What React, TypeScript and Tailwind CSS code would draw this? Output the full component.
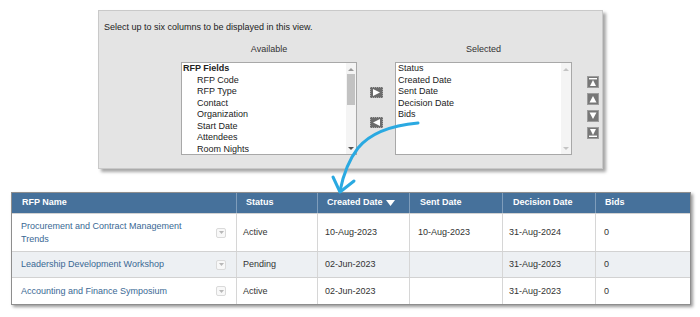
import React from 'react'

const available = [
  'RFP Code',
  'RFP Type',
  'Contact',
  'Organization',
  'Start Date',
  'Attendees',
  'Room Nights'
]

const selected = ['Status', 'Created Date', 'Sent Date', 'Decision Date', 'Bids']

interface Row {
  name: string
  status: string
  created: string
  sent: string
  decision: string
  bids: string
  height: string
  shaded?: boolean
}

const rows: Row[] = [
  {
    name: 'Procurement and Contract Management Trends',
    status: 'Active',
    created: '10-Aug-2023',
    sent: '10-Aug-2023',
    decision: '31-Aug-2024',
    bids: '0',
    height: 'h-[38px]'
  },
  {
    name: 'Leadership Development Workshop',
    status: 'Pending',
    created: '02-Jun-2023',
    sent: '',
    decision: '31-Aug-2023',
    bids: '0',
    height: 'h-[26px]',
    shaded: true
  },
  {
    name: 'Accounting and Finance Symposium',
    status: 'Active',
    created: '02-Jun-2023',
    sent: '',
    decision: '31-Aug-2023',
    bids: '0',
    height: 'h-[27px]'
  }
]

const cols = 'grid grid-cols-[224px_81px_92px_93px_93px_1fr]'

function Scrollbar({ thumb }: { thumb?: boolean }) {
  return (
    <div className="flex w-[10px] flex-col items-center bg-[#f4f4f4]">
      <svg width="6" height="8" viewBox="0 0 6 8" className="mt-[3px]">
        <path d="M0 5 L3 2 L6 5 Z" fill={thumb ? '#9a9a9a' : '#c4c4c4'} />
      </svg>
      <div className="flex-1 w-full px-[1px]">
        {thumb && <div className="h-[31px] w-full bg-[#c2c2c2]" />}
      </div>
      <svg width="6" height="8" viewBox="0 0 6 8" className="mb-[2px]">
        <path d="M0 3 L3 6 L6 3 Z" fill={thumb ? '#555' : '#c4c4c4'} />
      </svg>
    </div>
  )
}

function MoveButton({ dir }: { dir: 'right' | 'left' }) {
  return (
    <div className="flex h-[11px] w-[13px] items-center justify-center border border-dotted border-[#a8a8a8] bg-[#6c6c6c]">
      <svg width="7" height="7" viewBox="0 0 7 7">
        {dir === 'right' ? (
          <path d="M0 0 L7 3.5 L0 7 Z" fill="#fff" />
        ) : (
          <path d="M7 0 L0 3.5 L7 7 Z" fill="#fff" />
        )}
      </svg>
    </div>
  )
}

function OrderButton({ kind }: { kind: 'top' | 'up' | 'down' | 'bottom' }) {
  return (
    <div className="flex h-[12px] w-[12px] items-center justify-center border border-[#9c9c9c] bg-[#777]">
      <svg width="8" height="8" viewBox="0 0 8 8">
        {kind === 'top' && (
          <>
            <rect x="0" y="0" width="8" height="1.4" fill="#fff" />
            <path d="M4 2 L7 8 L1 8 Z" fill="#fff" />
          </>
        )}
        {kind === 'up' && <path d="M4 1 L7.5 7.5 L0.5 7.5 Z" fill="#fff" />}
        {kind === 'down' && <path d="M0.5 0.5 L7.5 0.5 L4 7 Z" fill="#fff" />}
        {kind === 'bottom' && (
          <>
            <path d="M1 0 L7 0 L4 6 Z" fill="#fff" />
            <rect x="0" y="6.6" width="8" height="1.4" fill="#fff" />
          </>
        )}
      </svg>
    </div>
  )
}

function RowMenu() {
  return (
    <div className="flex h-[10px] w-[10px] shrink-0 items-center justify-center rounded-[2px] border border-[#dadada] bg-[#f8f8f8]">
      <svg width="5" height="3" viewBox="0 0 5 3">
        <path d="M0 0 L5 0 L2.5 3 Z" fill="#b8b8b8" />
      </svg>
    </div>
  )
}

export default function App() {
  return (
    <div className="relative h-[317px] w-[700px] overflow-hidden bg-white font-['Liberation_Sans',Arial,sans-serif] text-[#222]">
      {/* column chooser */}
      <div className="ml-[98px] mt-[10px] h-[159px] w-[505px] border border-[#c9c9c9] bg-[#e4e4e4] pl-[5px] pt-[10px] shadow-[3px_3px_3px_rgba(0,0,0,0.35)]">
        <p className="text-[9px] leading-[12px]">
          Select up to six columns to be displayed in this view.
        </p>
        <div className="ml-[77px] mt-[10px] flex text-[9px] leading-[12px] text-[#333]">
          <div className="w-[176px] text-center">Available</div>
          <div className="w-[38px]" />
          <div className="w-[177px] text-center">Selected</div>
        </div>
        <div className="ml-[77px] mt-[7px] flex items-start">
          <div className="flex h-[93px] w-[176px] border border-[#a8a8a8] bg-white">
            <div className="flex-1 overflow-hidden pl-[1px] text-[9px] leading-[11.5px] text-[#222]">
              <div className="font-bold">RFP Fields</div>
              {available.map(item => (
                <div key={item} className="pl-[14px]">
                  {item}
                </div>
              ))}
            </div>
            <Scrollbar thumb />
          </div>
          <div className="flex h-[93px] w-[38px] flex-col items-center pt-[25px]">
            <MoveButton dir="right" />
            <div className="h-[19px]" />
            <MoveButton dir="left" />
          </div>
          <div className="flex h-[93px] w-[177px] border border-[#a8a8a8] bg-white">
            <div className="flex-1 overflow-hidden pl-[2px] text-[9px] leading-[11.5px] text-[#222]">
              {selected.map(item => (
                <div key={item}>{item}</div>
              ))}
            </div>
            <Scrollbar />
          </div>
          <div className="ml-[15px] mt-[14px] flex flex-col gap-[5px]">
            <OrderButton kind="top" />
            <OrderButton kind="up" />
            <OrderButton kind="down" />
            <OrderButton kind="bottom" />
          </div>
        </div>
      </div>

      {/* results grid */}
      <div className="ml-[11px] mt-[23px] w-[680px] border border-[#8e8e8e] text-[9px] shadow-[2px_2px_3px_rgba(0,0,0,0.4)]">
        <div className={`${cols} h-[20px] items-stretch bg-[#46719b] font-bold text-white`}>
          <div className="flex items-center pl-[10px]">RFP Name</div>
          <div className="flex items-center border-l border-[#7f9dbb] pl-[9px]">Status</div>
          <div className="flex items-center gap-[3px] border-l border-[#7f9dbb] pl-[9px]">
            Created Date
            <svg width="9" height="6" viewBox="0 0 9 6">
              <path d="M0 0 L9 0 L4.5 6 Z" fill="#fff" />
            </svg>
          </div>
          <div className="flex items-center border-l border-[#7f9dbb] pl-[10px]">Sent Date</div>
          <div className="flex items-center border-l border-[#7f9dbb] pl-[10px]">Decision Date</div>
          <div className="flex items-center border-l border-[#7f9dbb] pl-[9px]">Bids</div>
        </div>
        {rows.map(row => (
          <div
            key={row.name}
            className={`${cols} ${row.height} border-t border-[#d2d2d2] leading-[13px] text-[#333] ${
              row.shaded ? 'bg-[#edf0f3]' : 'bg-white'
            }`}
          >
            <div className="flex items-center justify-between pl-[9px] pr-[10px]">
              <span className="max-w-[186px] text-[#3a6894]">{row.name}</span>
              <RowMenu />
            </div>
            <div className="flex items-center border-l border-[#d6d6d6] pl-[6px]">{row.status}</div>
            <div className="flex items-center border-l border-[#d6d6d6] pl-[7px]">{row.created}</div>
            <div className="flex items-center border-l border-[#d6d6d6] pl-[8px]">{row.sent}</div>
            <div className="flex items-center border-l border-[#d6d6d6] pl-[6px]">{row.decision}</div>
            <div className="flex items-center border-l border-[#d6d6d6] pl-[8px]">{row.bids}</div>
          </div>
        ))}
      </div>

      {/* callout arrow */}
      <svg
        className="pointer-events-none absolute left-0 top-0"
        width="700"
        height="317"
        viewBox="0 0 700 317"
      >
        <path
          d="M418 123 C 396 125, 372 131, 358 148 C 348 161, 343 176, 340 191"
          fill="none"
          stroke="#2aa9e1"
          strokeWidth="3"
          strokeLinecap="round"
        />
        <path
          d="M333 177 L340 192 L354 181"
          fill="none"
          stroke="#2aa9e1"
          strokeWidth="3"
          strokeLinecap="round"
          strokeLinejoin="round"
        />
      </svg>
    </div>
  )
}
